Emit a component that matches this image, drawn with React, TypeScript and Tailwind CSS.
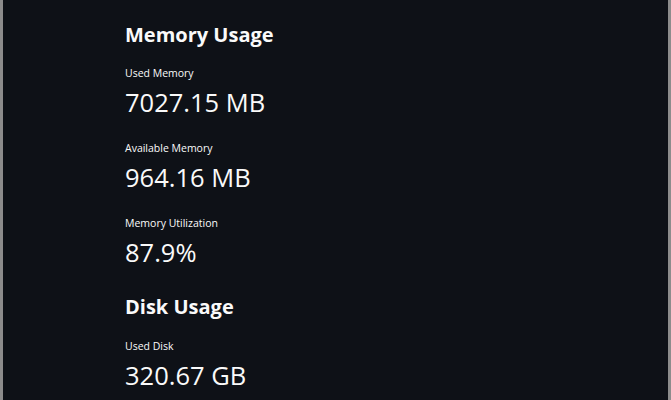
export default function App() {
  const font = { fontFamily: '"Open Sans", "Noto Sans", sans-serif' };
  const Label = ({ children, className = "" }: { children: React.ReactNode; className?: string }) => (
    <div className={"text-[10.5px] leading-[16px] text-[#fafafa] " + className}>{children}</div>
  );
  const Value = ({ children }: { children: React.ReactNode }) => (
    <div className="mt-[5px] text-[25.5px] leading-[32px] text-[#fafafa]">{children}</div>
  );
  return (
    <div
      className="w-[671px] h-[400px] overflow-hidden bg-[#0e1117] border-x-[3px] border-[#8c8c8c] box-border"
      style={font}
    >
      <div className="pl-[122px] pt-[21px] flex flex-col">
        <div className="text-[20px] leading-[28px] font-bold text-[#fafafa]">Memory Usage</div>
        <Label className="mt-[16px]">Used Memory</Label>
        <Value>7027.15 MB</Value>
        <Label className="mt-[22px]">Available Memory</Label>
        <Value>964.16 MB</Value>
        <Label className="mt-[22px]">Memory Utilization</Label>
        <Value>87.9%</Value>
        <div className="mt-[25px] text-[20px] leading-[28px] font-bold text-[#fafafa]">Disk Usage</div>
        <Label className="mt-[17px]">Used Disk</Label>
        <Value>320.67 GB</Value>
      </div>
    </div>
  );
}
